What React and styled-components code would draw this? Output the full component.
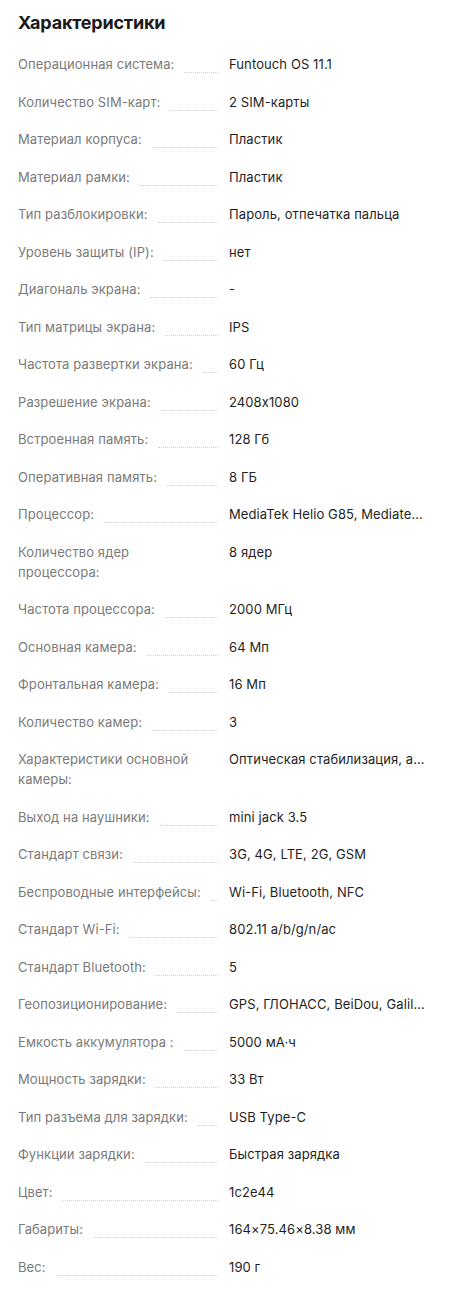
import React from "react";
import styled, { createGlobalStyle } from "styled-components";

const GlobalStyle = createGlobalStyle`
  body {
    margin: 0;
    background: #ffffff;
    font-family: Inter, "Noto Sans", Arial, sans-serif;
    font-feature-settings: "calt" 0;
  }
`;

const Section = styled.section`
  padding: 11px 18px 12px 18px;
`;

const Title = styled.h2`
  margin: 0 0 19px 0;
  font-size: 18px;
  line-height: 24px;
  font-weight: 700;
  color: #1a1a1a;
  letter-spacing: -0.2px;
`;

const List = styled.div`
  display: flex;
  flex-direction: column;
  gap: 17.5px;
`;

const Row = styled.div`
  display: grid;
  grid-template-columns: 200px 1fr;
  column-gap: 11px;
  font-size: 13px;
  line-height: 20px;
  letter-spacing: 0.1px;
`;

const LabelCell = styled.div`
  display: flex;
  min-width: 0;
`;

const Label = styled.span`
  flex: 0 1 auto;
  color: #7a7a7a;
`;

const Leader = styled.span`
  flex: 1 1 0;
  min-width: 0;
  height: 18px;
  margin-left: 10px;
  border-bottom: 1px dotted #d2d2d2;
`;

const Value = styled.div`
  color: #1f1f1f;
  white-space: nowrap;
  overflow: hidden;
  text-overflow: ellipsis;
  min-width: 0;
  padding-right: 7px;
`;

const specs = [
  ["Операционная система:", "Funtouch OS 11.1"],
  ["Количество SIM-карт:", "2 SIM-карты"],
  ["Материал корпуса:", "Пластик"],
  ["Материал рамки:", "Пластик"],
  ["Тип разблокировки:", "Пароль, отпечатка пальца"],
  ["Уровень защиты (IP):", "нет"],
  ["Диагональ экрана:", "-"],
  ["Тип матрицы экрана:", "IPS"],
  ["Частота развертки экрана:", "60 Гц"],
  ["Разрешение экрана:", "2408x1080"],
  ["Встроенная память:", "128 Гб"],
  ["Оперативная память:", "8 ГБ"],
  ["Процессор:", "MediaTek Helio G85, Mediatek MT6769V/CZ"],
  ["Количество ядер процессора:", "8 ядер"],
  ["Частота процессора:", "2000 МГц"],
  ["Основная камера:", "64 Мп"],
  ["Фронтальная камера:", "16 Мп"],
  ["Количество камер:", "3"],
  ["Характеристики основной камеры:", "Оптическая стабилизация, автофокус"],
  ["Выход на наушники:", "mini jack 3.5"],
  ["Стандарт связи:", "3G, 4G, LTE, 2G, GSM"],
  ["Беспроводные интерфейсы:", "Wi-Fi, Bluetooth, NFC"],
  ["Стандарт Wi-Fi:", "802.11 a/b/g/n/ac"],
  ["Стандарт Bluetooth:", "5"],
  ["Геопозиционирование:", "GPS, ГЛОНАСС, BeiDou, Galileo"],
  ["Емкость аккумулятора :", "5000 мА·ч"],
  ["Мощность зарядки:", "33 Вт"],
  ["Тип разъема для зарядки:", "USB Type-C"],
  ["Функции зарядки:", "Быстрая зарядка"],
  ["Цвет:", "1c2e44"],
  ["Габариты:", "164×75.46×8.38 мм"],
  ["Вес:", "190 г"],
];

export default function App() {
  return (
    <>
      <GlobalStyle />
      <Section>
        <Title>Характеристики</Title>
        <List>
          {specs.map(([label, value]) => (
            <Row key={label}>
              <LabelCell>
                <Label>{label}</Label>
                <Leader />
              </LabelCell>
              <Value>{value}</Value>
            </Row>
          ))}
        </List>
      </Section>
    </>
  );
}
